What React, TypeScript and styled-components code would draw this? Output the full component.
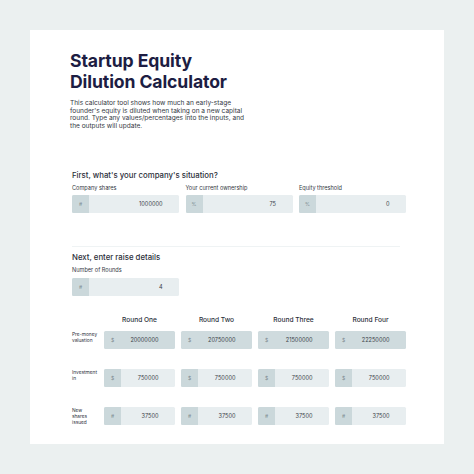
import { Fragment } from "react";
import styled, { createGlobalStyle } from "styled-components";

const GlobalStyle = createGlobalStyle`
  html, body {
    margin: 0;
    padding: 0;
    background: #ebf0f0;
  }
  body {
    font-family: Inter, "Noto Sans", sans-serif;
    color: #2e323d;
    -webkit-font-smoothing: antialiased;
  }
`;

const Page = styled.div`
  width: 474px;
  height: 474px;
  padding: 30px;
  box-sizing: border-box;
`;

const Card = styled.div`
  background: #ffffff;
  height: 414px;
  box-sizing: border-box;
  padding: 21px 38px 0 40px;
`;

const Title = styled.h1`
  margin: 0;
  font-size: 17.6px;
  line-height: 20.5px;
  font-weight: 700;
  letter-spacing: -0.1px;
  color: #1d1d43;
  width: 180px;
`;

const Intro = styled.p`
  margin: 8px 0 0;
  font-size: 6.55px;
  line-height: 7.7px;
  width: 176px;
  color: #333742;
`;

const Section = styled.div<{ $top: number }>`
  margin-top: ${(p) => p.$top}px;
  padding-left: 2px;
`;

const Heading = styled.h2`
  margin: 0;
  font-size: 7.8px;
  line-height: 10px;
  font-weight: 500;
  color: #2b2f3a;
`;

const FieldRow = styled.div`
  display: flex;
  gap: 6.5px;
  margin-top: 5px;
`;

const Field = styled.div`
  width: 107px;
`;

const Label = styled.div`
  font-size: 5.6px;
  line-height: 7px;
  color: #333742;
  margin-bottom: 3.5px;
`;

const Box = styled.div<{ $w: number; $output?: boolean }>`
  width: ${(p) => p.$w}px;
  height: 18px;
  display: flex;
  border-radius: 1.5px;
  overflow: hidden;
  background: ${(p) => (p.$output ? "#cfdbde" : "#e8eef0")};
  font-size: 5.6px;
  color: #3a3f48;
`;

const Prefix = styled.div<{ $output?: boolean }>`
  width: 17px;
  display: flex;
  align-items: center;
  justify-content: center;
  background: ${(p) => (p.$output ? "transparent" : "#cbd8db")};
  color: #7c8a90;
  font-size: 5px;
`;

const Value = styled.div`
  flex: 1;
  display: flex;
  align-items: center;
  justify-content: flex-end;
  padding-right: 16.5px;
`;

const Divider = styled.hr`
  border: none;
  border-top: 1px solid #eff3f4;
  margin: 33px 0 0 2px;
  width: 328px;
`;

const RoundsGrid = styled.div`
  display: grid;
  grid-template-columns: 26px repeat(4, 71px);
  column-gap: 6px;
  margin-top: 20px;
  padding-left: 2px;
`;

const RoundHead = styled.div`
  font-size: 6.6px;
  line-height: 9px;
  font-weight: 500;
  text-align: center;
  color: #2b2f3a;
  margin-bottom: 6.5px;
`;

const RowLabel = styled.div<{ $top: number }>`
  font-size: 4.8px;
  line-height: 6px;
  color: #2e323d;
  margin-top: ${(p) => p.$top}px;
`;

const Cell = styled.div<{ $top: number }>`
  margin-top: ${(p) => p.$top}px;
`;

type InputProps = {
  prefix: string;
  value: string;
  width: number;
  output?: boolean;
};

const NumberInput = ({ prefix, value, width, output }: InputProps) => (
  <Box $w={width} $output={output}>
    <Prefix $output={output}>{prefix}</Prefix>
    <Value>{value}</Value>
  </Box>
);

const rounds = ["Round One", "Round Two", "Round Three", "Round Four"];
const valuations = ["20000000", "20750000", "21500000", "22250000"];

const rows = [
  { label: ["Pre-money", "valuation"], prefix: "$", values: valuations, output: true, top: 0 },
  { label: ["Investment", "in"], prefix: "$", values: rounds.map(() => "750000"), top: 20 },
  { label: ["New", "shares", "issued"], prefix: "#", values: rounds.map(() => "37500"), top: 20 },
];

export default function App() {
  return (
    <Page>
      <GlobalStyle />
      <Card>
        <Title>Startup Equity Dilution Calculator</Title>
        <Intro>
          This calculator tool shows how much an early-stage founder's equity is
          diluted when taking on a new capital round. Type any values/percentages
          into the inputs, and the outputs will update.
        </Intro>

        <Section $top={39}>
          <Heading>First, what's your company's situation?</Heading>
          <FieldRow>
            <Field>
              <Label>Company shares</Label>
              <NumberInput prefix="#" value="1000000" width={107} />
            </Field>
            <Field>
              <Label>Your current ownership</Label>
              <NumberInput prefix="%" value="75" width={107} />
            </Field>
            <Field>
              <Label>Equity threshold</Label>
              <NumberInput prefix="%" value="0" width={107} />
            </Field>
          </FieldRow>
        </Section>

        <Divider />

        <Section $top={5}>
          <Heading>Next, enter raise details</Heading>
          <FieldRow>
            <Field>
              <Label>Number of Rounds</Label>
              <NumberInput prefix="#" value="4" width={107} />
            </Field>
          </FieldRow>
        </Section>

        <RoundsGrid>
          <div />
          {rounds.map((r) => (
            <RoundHead key={r}>{r}</RoundHead>
          ))}
          {rows.map((row) => (
            <Fragment key={row.label.join(" ")}>
              <RowLabel $top={row.top}>
                {row.label.map((l) => (
                  <div key={l}>{l}</div>
                ))}
              </RowLabel>
              {row.values.map((v, i) => (
                <Cell key={i} $top={row.top}>
                  <NumberInput prefix={row.prefix} value={v} width={71} output={row.output} />
                </Cell>
              ))}
            </Fragment>
          ))}
        </RoundsGrid>
      </Card>
    </Page>
  );
}
